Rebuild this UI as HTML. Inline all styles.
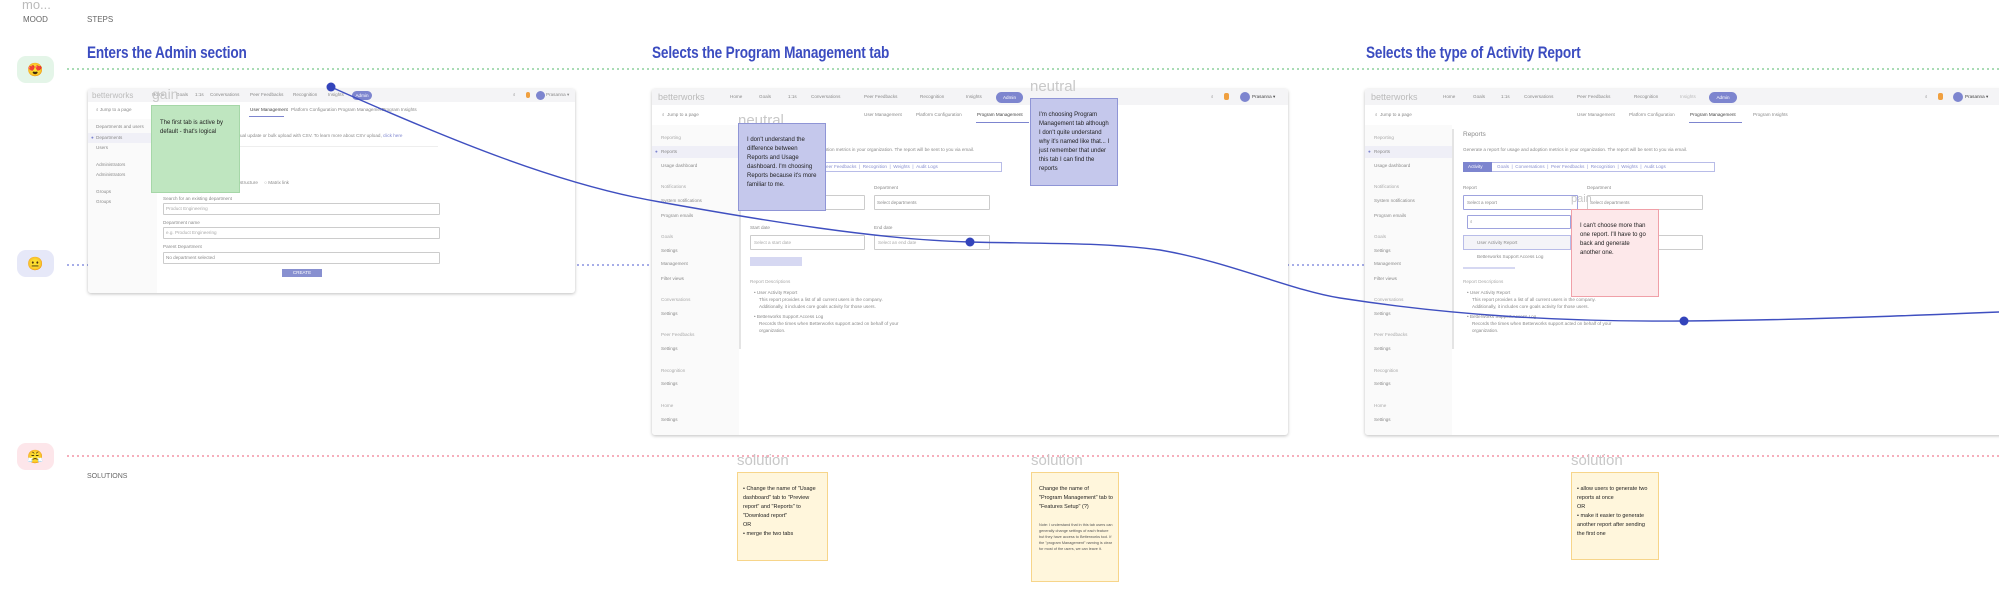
<!DOCTYPE html>
<html><head><meta charset="utf-8"><style>
*{margin:0;padding:0;box-sizing:border-box}
body{width:1999px;height:596px;background:#fff;position:relative;overflow:hidden;font-family:"Liberation Sans",sans-serif;color:#555}
.a{position:absolute;white-space:nowrap}
.h{font-size:17px;font-weight:bold;color:#3b4cc0;letter-spacing:-0.2px;transform:scaleX(.8);transform-origin:left}
.pill{position:absolute;left:17px;width:37px;height:27px;border-radius:9px;font-size:13px;text-align:center;line-height:27px}
.dl{position:absolute;left:67px;right:0;height:1.5px}
.fr{position:absolute;background:#fff;border-radius:3px;box-shadow:0 1px 3px rgba(0,0,0,.25);overflow:hidden}
.nav{position:absolute;left:0;top:0;right:0;height:16px;background:#f4f4f6}
.t{position:absolute;white-space:nowrap;font-size:4.6px;color:#8a8a8a;line-height:6px}
.side{position:absolute;left:0;top:36px;bottom:0;width:87px;background:#fafafa}
.box{position:absolute;border:1px solid #ccc;background:#fff;border-radius:1px}
.st{position:absolute;font-size:6px;line-height:9px;color:#222;padding:14px 8px 0 9px;white-space:normal}
.lbl{position:absolute;font-size:15px;color:#c8c8c8;white-space:nowrap}
</style></head><body>
<div class="a" style="left:22px;top:-3px;font-size:13px;color:#bbb">mo...</div>
<div class="a" style="left:23px;top:15px;font-size:8px;color:#666">MOOD</div>
<div class="a" style="left:87px;top:15px;font-size:8px;color:#666">STEPS</div>
<div class="a h" style="left:87px;top:43px">Enters the Admin section</div>
<div class="a h" style="left:652px;top:43px">Selects the Program Management tab</div>
<div class="a h" style="left:1366px;top:43px">Selects the type of Activity Report</div>

<div class="pill" style="top:56px;background:#e4f5e8">😍</div>
<div class="pill" style="top:250px;background:#e6e8f8">😐</div>
<div class="pill" style="top:443px;background:#fde6ea">😤</div>
<div class="dl" style="top:68px;background:repeating-linear-gradient(90deg,#a9dbb5 0 2px,transparent 2px 5px)"></div>
<div class="dl" style="top:264px;background:repeating-linear-gradient(90deg,#a6ade8 0 2px,transparent 2px 5px)"></div>
<div class="dl" style="top:455px;background:repeating-linear-gradient(90deg,#f6aebb 0 2px,transparent 2px 5px)"></div>
<div class="a" style="left:87px;top:473px;font-size:7px;color:#666">SOLUTIONS</div>

<!-- FRAME 1 -->
<div class="fr" style="left:88px;top:89px;width:487px;height:204px">
 <div class="nav" style="height:13px"></div>
 <div class="t" style="left:4px;top:2px;font-size:8px;line-height:9px;color:#bbb">betterworks</div>
 <div class="t" style="left:64px;top:3px">Home</div><div class="t" style="left:88px;top:3px">Goals</div><div class="t" style="left:107px;top:3px">1:1s</div><div class="t" style="left:122px;top:3px">Conversations</div><div class="t" style="left:162px;top:3px">Peer Feedbacks</div><div class="t" style="left:205px;top:3px">Recognition</div><div class="t" style="left:240px;top:3px">Insights</div>
 <div class="t" style="left:264px;top:2px;width:20px;height:9px;background:#7d85cf;border-radius:5px;color:#fff;text-align:center;line-height:9px">Admin</div>
 <div class="t" style="left:425px;top:3px">⌕</div><div class="a" style="left:438px;top:3px;width:4px;height:6px;background:#f0a040;border-radius:2px"></div>
 <div class="a" style="left:448px;top:2px;width:9px;height:9px;border-radius:50%;background:#7d85cf"></div><div class="t" style="left:458px;top:3px">Prasanna ▾</div>
 <div class="t" style="left:8px;top:18px">⌕ Jump to a page</div>
 <div class="t" style="left:162px;top:18px;color:#444">User Management</div><div class="a" style="left:161px;top:27px;width:35px;height:1px;background:#7d85cf"></div>
 <div class="t" style="left:203px;top:18px">Platform Configuration</div><div class="t" style="left:250px;top:18px">Program Management</div><div class="t" style="left:294px;top:18px">Program Insights</div>
 <div class="side" style="top:30px;width:69px"></div>
 <div class="t" style="left:8px;top:35px">Departments and users</div>
 <div class="a" style="left:0;top:44px;width:69px;height:10px;background:#f0f0f7"></div>
 <div class="t" style="left:3px;top:46px;color:#7d85cf">●</div><div class="t" style="left:8px;top:46px">Departments</div>
 <div class="t" style="left:8px;top:56px">Users</div><div class="t" style="left:8px;top:73px">Administrators</div><div class="t" style="left:8px;top:83px">Administrators</div><div class="t" style="left:8px;top:100px">Groups</div><div class="t" style="left:8px;top:110px">Groups</div>
 <div class="t" style="left:152px;top:44px">ual update or bulk upload with CSV. To learn more about CSV upload, <span style="color:#7d85cf">click here</span></div>
 <div class="a" style="left:75px;top:57px;width:275px;height:1px;background:#eee"></div>
 <div class="t" style="left:152px;top:91px">structure &nbsp;&nbsp;&nbsp; ○ Matrix link</div>
 <div class="t" style="left:75px;top:107px">Search for an existing department</div><div class="box" style="left:75px;top:114px;width:277px;height:12px"></div><div class="t" style="left:78px;top:117px;color:#aaa">Product Engineering</div>
 <div class="t" style="left:75px;top:131px">Department name</div><div class="box" style="left:75px;top:138px;width:277px;height:12px"></div><div class="t" style="left:78px;top:141px;color:#aaa">e.g. Product Engineering</div>
 <div class="t" style="left:75px;top:155px">Parent Department</div><div class="box" style="left:75px;top:163px;width:277px;height:12px"></div><div class="t" style="left:78px;top:166px">No department selected</div>
 <div class="t" style="left:194px;top:180px;width:40px;height:8px;background:#8890d0;color:#fff;text-align:center;line-height:8px">CREATE</div>
 <div class="a" style="left:63px;top:16px;width:89px;height:88px;background:#bfe6c0;border:1px solid #a6d7a8"></div>
 <div class="st" style="left:63px;top:16px;width:89px;padding-top:14px">The first tab is active by default - that's logical</div>
 <div class="lbl" style="left:64px;top:-3px;font-size:14px">gain</div>
</div>

<!-- FRAME 2 -->
<div class="fr" style="left:652px;top:89px;width:636px;height:346px">
 <div class="nav"></div>
 <div class="t" style="left:6px;top:3px;font-size:9px;line-height:10px;color:#bbb">betterworks</div>
 <div class="t" style="left:78px;top:5px">Home</div><div class="t" style="left:107px;top:5px">Goals</div><div class="t" style="left:136px;top:5px">1:1s</div><div class="t" style="left:159px;top:5px">Conversations</div><div class="t" style="left:212px;top:5px">Peer Feedbacks</div><div class="t" style="left:268px;top:5px">Recognition</div><div class="t" style="left:314px;top:5px">Insights</div>
 <div class="t" style="left:344px;top:3px;width:27px;height:11px;background:#7d85cf;border-radius:6px;color:#fff;text-align:center;line-height:11px">Admin</div>
 <div class="t" style="left:559px;top:5px">⌕</div><div class="a" style="left:572px;top:4px;width:5px;height:7px;background:#f0a040;border-radius:2px"></div>
 <div class="a" style="left:588px;top:3px;width:10px;height:10px;border-radius:50%;background:#7d85cf"></div><div class="t" style="left:600px;top:5px;color:#444">Prasanna ▾</div>
 <div class="t" style="left:10px;top:23px">⌕ &nbsp;Jump to a page</div>
 <div class="t" style="left:212px;top:23px">User Management</div><div class="t" style="left:264px;top:23px">Platform Configuration</div><div class="t" style="left:325px;top:23px;color:#444">Program Management</div><div class="a" style="left:324px;top:33px;width:53px;height:1px;background:#7d85cf"></div><div class="t" style="left:388px;top:23px">Program Insights</div>
 <div class="side"></div><div class="a" style="left:87px;top:40px;width:2px;height:220px;background:#e4e4e4"></div>
 <div class="a" style="left:0;top:57px;width:87px;height:12px;background:#efeff7"></div><div class="t" style="left:3px;top:60px;color:#7d85cf">●</div>
 <div class="t" style="left:9px;top:46px;color:#aaa">Reporting</div><div class="t" style="left:9px;top:60px">Reports</div><div class="t" style="left:9px;top:74px">Usage dashboard</div><div class="t" style="left:9px;top:95px;color:#aaa">Notifications</div><div class="t" style="left:9px;top:109px">System notifications</div><div class="t" style="left:9px;top:124px">Program emails</div><div class="t" style="left:9px;top:145px;color:#aaa">Goals</div><div class="t" style="left:9px;top:159px">Settings</div><div class="t" style="left:9px;top:172px">Management</div><div class="t" style="left:9px;top:187px">Filter views</div><div class="t" style="left:9px;top:208px;color:#aaa">Conversations</div><div class="t" style="left:9px;top:222px">Settings</div><div class="t" style="left:9px;top:243px;color:#aaa">Peer Feedbacks</div><div class="t" style="left:9px;top:257px">Settings</div><div class="t" style="left:9px;top:279px;color:#aaa">Recognition</div><div class="t" style="left:9px;top:292px">Settings</div><div class="t" style="left:9px;top:314px;color:#aaa">Home</div><div class="t" style="left:9px;top:328px">Settings</div>
 <div class="t" style="left:98px;top:42px;font-size:6.5px;line-height:8px">Reports</div>
 <div class="t" style="left:98px;top:58px">Generate a report for usage and adoption metrics in your organization. The report will be sent to you via email.</div>
 <div class="a" style="left:98px;top:73px;width:252px;height:10px;border:1px solid #b8bce8"></div>
 <div class="t" style="left:100px;top:75px;color:#8990d0">Activity &nbsp;| Goals | Conversations &nbsp;| &nbsp;Peer Feedbacks &nbsp;| &nbsp;Recognition &nbsp;| &nbsp;Weights &nbsp;| &nbsp;Audit Logs</div>
 <div class="t" style="left:98px;top:96px">Report</div><div class="t" style="left:222px;top:96px">Department</div>
 <div class="box" style="left:98px;top:106px;width:115px;height:15px"></div><div class="box" style="left:222px;top:106px;width:116px;height:15px"></div><div class="t" style="left:225px;top:111px">Select departments</div>
 <div class="t" style="left:98px;top:136px">Start date</div><div class="t" style="left:222px;top:136px">End date</div>
 <div class="box" style="left:98px;top:146px;width:115px;height:15px"></div><div class="box" style="left:222px;top:146px;width:116px;height:15px"></div><div class="t" style="left:102px;top:151px;color:#aaa">Select a start date</div><div class="t" style="left:226px;top:151px;color:#aaa">Select an end date</div>
 <div class="a" style="left:98px;top:168px;width:52px;height:9px;background:#d6d8f2"></div>
 <div class="t" style="left:98px;top:190px;color:#aaa">Report Descriptions</div>
 <div class="t" style="left:102px;top:201px">• User Activity Report</div><div class="t" style="left:107px;top:208px">This report provides a list of all current users in the company.</div><div class="t" style="left:107px;top:215px">Additionally, it includes core goals activity for those users.</div><div class="t" style="left:102px;top:225px">• Betterworks Support Access Log</div><div class="t" style="left:107px;top:232px">Records the times when Betterworks support acted on behalf of your</div><div class="t" style="left:107px;top:239px">organization.</div>
 <div class="lbl" style="left:86px;top:23px">neutral</div>
 <div class="a" style="left:86px;top:34px;width:88px;height:88px;background:#c5c8ec;border:1px solid #8f95d6"></div>
 <div class="st" style="left:86px;top:34px;width:88px;padding-top:13px">I don't understand the difference between Reports and Usage dashboard. I'm choosing Reports because it's more familiar to me.</div>
</div>
<div class="lbl" style="left:1030px;top:78px">neutral</div>
<div class="a" style="left:1030px;top:98px;width:88px;height:88px;background:#c5c8ec;border:1px solid #8f95d6"></div>
<div class="st" style="left:1030px;top:98px;width:88px;padding-top:13px">I'm choosing Program Management tab although I don't quite understand why it's named like that... I just remember that under this tab I can find the reports</div>

<!-- FRAME 3 -->
<div class="fr" style="left:1365px;top:89px;width:660px;height:346px">
 <div class="nav"></div>
 <div class="t" style="left:6px;top:3px;font-size:9px;line-height:10px;color:#bbb">betterworks</div>
 <div class="t" style="left:78px;top:5px">Home</div><div class="t" style="left:108px;top:5px">Goals</div><div class="t" style="left:136px;top:5px">1:1s</div><div class="t" style="left:159px;top:5px">Conversations</div><div class="t" style="left:212px;top:5px">Peer Feedbacks</div><div class="t" style="left:269px;top:5px">Recognition</div><div class="t" style="left:315px;top:5px;color:#bbb">Insights</div>
 <div class="t" style="left:344px;top:3px;width:28px;height:11px;background:#7d85cf;border-radius:6px;color:#fff;text-align:center;line-height:11px">Admin</div>
 <div class="t" style="left:560px;top:5px">⌕</div><div class="a" style="left:573px;top:4px;width:5px;height:7px;background:#f0a040;border-radius:2px"></div>
 <div class="a" style="left:588px;top:3px;width:10px;height:10px;border-radius:50%;background:#7d85cf"></div><div class="t" style="left:600px;top:5px;color:#444">Prasanna ▾</div>
 <div class="t" style="left:10px;top:23px">⌕ &nbsp;Jump to a page</div>
 <div class="t" style="left:212px;top:23px">User Management</div><div class="t" style="left:264px;top:23px">Platform Configuration</div><div class="t" style="left:325px;top:23px;color:#444">Program Management</div><div class="a" style="left:324px;top:33px;width:53px;height:1px;background:#7d85cf"></div><div class="t" style="left:388px;top:23px">Program Insights</div>
 <div class="side"></div><div class="a" style="left:87px;top:40px;width:2px;height:220px;background:#e4e4e4"></div>
 <div class="a" style="left:0;top:57px;width:87px;height:12px;background:#efeff7"></div><div class="t" style="left:3px;top:60px;color:#7d85cf">●</div>
 <div class="t" style="left:9px;top:46px;color:#aaa">Reporting</div><div class="t" style="left:9px;top:60px">Reports</div><div class="t" style="left:9px;top:74px">Usage dashboard</div><div class="t" style="left:9px;top:95px;color:#aaa">Notifications</div><div class="t" style="left:9px;top:109px">System notifications</div><div class="t" style="left:9px;top:124px">Program emails</div><div class="t" style="left:9px;top:145px;color:#aaa">Goals</div><div class="t" style="left:9px;top:159px">Settings</div><div class="t" style="left:9px;top:172px">Management</div><div class="t" style="left:9px;top:187px">Filter views</div><div class="t" style="left:9px;top:208px;color:#aaa">Conversations</div><div class="t" style="left:9px;top:222px">Settings</div><div class="t" style="left:9px;top:243px;color:#aaa">Peer Feedbacks</div><div class="t" style="left:9px;top:257px">Settings</div><div class="t" style="left:9px;top:279px;color:#aaa">Recognition</div><div class="t" style="left:9px;top:292px">Settings</div><div class="t" style="left:9px;top:314px;color:#aaa">Home</div><div class="t" style="left:9px;top:328px">Settings</div>
 <div class="t" style="left:98px;top:42px;font-size:6.5px;line-height:8px">Reports</div>
 <div class="t" style="left:98px;top:58px">Generate a report for usage and adoption metrics in your organization. The report will be sent to you via email.</div>
 <div class="a" style="left:98px;top:73px;width:252px;height:10px;border:1px solid #b8bce8"></div>
 <div class="a" style="left:98px;top:73px;width:29px;height:10px;background:#7d85cf"></div>
 <div class="t" style="left:103px;top:75px;color:#fff">Activity</div><div class="t" style="left:132px;top:75px;color:#8990d0">Goals &nbsp;| &nbsp;Conversations &nbsp;| &nbsp;Peer Feedbacks &nbsp;| &nbsp;Recognition &nbsp;| &nbsp;Weights &nbsp;| &nbsp;Audit Logs</div>
 <div class="t" style="left:98px;top:96px">Report</div><div class="t" style="left:222px;top:96px">Department</div>
 <div class="box" style="left:98px;top:106px;width:115px;height:15px;border-color:#9ea3de"></div><div class="t" style="left:102px;top:111px">Select a report</div>
 <div class="box" style="left:222px;top:106px;width:116px;height:15px"></div><div class="t" style="left:225px;top:111px">Select departments</div>
 <div class="box" style="left:102px;top:126px;width:104px;height:14px;border-color:#9ea3de"></div><div class="t" style="left:105px;top:130px">⌕</div>
 <div class="box" style="left:98px;top:146px;width:240px;height:15px"></div>
 <div class="a" style="left:98px;top:146px;width:108px;height:15px;background:#f4f4f8;border:1px solid #b8bce8"></div><div class="t" style="left:112px;top:151px">User Activity Report</div>
 <div class="t" style="left:112px;top:165px">Betterworks Support Access Log</div>
 <div class="a" style="left:98px;top:178px;width:52px;height:2px;background:#d6d8f2"></div>
 <div class="t" style="left:98px;top:190px;color:#aaa">Report Descriptions</div>
 <div class="t" style="left:102px;top:201px">• User Activity Report</div><div class="t" style="left:107px;top:208px">This report provides a list of all current users in the company.</div><div class="t" style="left:107px;top:215px">Additionally, it includes core goals activity for those users.</div><div class="t" style="left:102px;top:225px">• Betterworks Support Access Log</div><div class="t" style="left:107px;top:232px">Records the times when Betterworks support acted on behalf of your</div><div class="t" style="left:107px;top:239px">organization.</div>
 <div class="lbl" style="left:206px;top:104px;font-size:11px">pain</div>
 <div class="a" style="left:206px;top:120px;width:88px;height:88px;background:#fde8ea;border:1px solid #f0a0a8"></div>
 <div class="st" style="left:206px;top:120px;width:88px;padding-top:13px">I can't choose more than one report. I'll have to go back and generate another one.</div>
</div>

<!-- curve -->
<svg class="a" style="left:0;top:0" width="1999" height="596">
<path d="M331,87 C450,140 560,185 660,202 C760,220 880,240 970,242 C1050,244 1100,242 1160,250 C1230,262 1290,290 1340,298 C1450,315 1560,322 1684,321 C1800,320 1900,316 1999,312" fill="none" stroke="#3f4fc0" stroke-width="1.4"/>
<circle cx="331" cy="87" r="4.5" fill="#3344bb"/><circle cx="970" cy="242" r="4.5" fill="#3344bb"/><circle cx="1684" cy="321" r="4.5" fill="#3344bb"/>
</svg>

<!-- solutions -->
<div class="lbl" style="left:737px;top:452px">solution</div>
<div class="lbl" style="left:1031px;top:452px">solution</div>
<div class="lbl" style="left:1571px;top:452px">solution</div>
<div class="a" style="left:737px;top:472px;width:91px;height:89px;background:#fff6dc;border:1px solid #f7d58a"></div>
<div class="st" style="left:737px;top:472px;width:91px;font-size:5.5px;line-height:9px;padding:13px 6px 0 6px">• Change the name of "Usage dashboard" tab to "Preview report" and "Reports" to "Download report"<br>OR<br>• merge the two tabs</div>
<div class="a" style="left:1031px;top:472px;width:88px;height:110px;background:#fff6dc;border:1px solid #f7d58a"></div>
<div class="st" style="left:1031px;top:472px;width:88px;font-size:5.5px;line-height:9px;padding:13px 6px 0 8px">Change the name of "Program Management" tab to "Features Setup" (?)<div style="font-size:3.8px;line-height:6px;margin-top:10px;color:#555">Note: I understand that in this tab users can generally change settings of each feature but they have access to Betterworks tool. If the "program Management" naming is clear for most of the users, we can leave it.</div></div>
<div class="a" style="left:1571px;top:472px;width:88px;height:88px;background:#fff6dc;border:1px solid #f7d58a"></div>
<div class="st" style="left:1571px;top:472px;width:88px;font-size:5.5px;line-height:9px;padding:13px 6px 0 6px">• allow users to generate two reports at once<br>OR<br>• make it easier to generate another report after sending the first one</div>
</body></html>
